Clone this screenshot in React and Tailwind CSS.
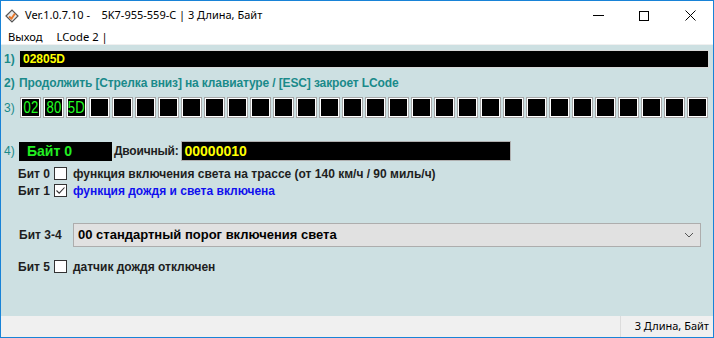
import React from "react";

const cells = ["02", "80", "5D", ...Array(27).fill("")];

function AppIcon() {
  return (
    <svg width="16" height="16" viewBox="0 0 16 16">
      <path d="M2 8 L8 2 L14 8 L8 14 Z" fill="#e9e9e9" stroke="#555" strokeWidth="1.2" />
      <path d="M5 8.5 L7.5 10.5 L11 5.5" fill="none" stroke="#e8782a" strokeWidth="2" />
    </svg>
  );
}

function Checkbox({ checked }) {
  return (
    <span className="flex h-[13px] w-[13px] items-center justify-center border border-[#333] bg-white">
      {checked && (
        <svg width="11" height="11" viewBox="0 0 11 11">
          <path d="M1.5 5.5 L4.2 8.2 L9.5 2.5" fill="none" stroke="#333" strokeWidth="1.1" />
        </svg>
      )}
    </span>
  );
}

export default function App() {
  return (
    <div className="flex h-[338px] w-[714px] flex-col overflow-hidden border border-[#1883d7] bg-white font-['Liberation_Sans',Arial,sans-serif]">
      {/* title bar */}
      <div className="flex h-[29px] items-center font-['Noto_Sans',sans-serif] text-[11px] text-black">
        <div className="ml-[3px] mr-[5px] flex items-center">
          <AppIcon />
        </div>
        <span className="whitespace-pre">Ver.1.0.7.10 -    5K7-955-559-C | 3 Длина, Байт</span>
        <div className="ml-auto flex h-full">
          <div className="flex w-[46px] items-center justify-center">
            <span className="h-px w-[11px] bg-black" />
          </div>
          <div className="flex w-[46px] items-center justify-center">
            <span className="h-[10px] w-[10px] border border-black" />
          </div>
          <div className="flex w-[46px] items-center justify-center">
            <svg width="11" height="11" viewBox="0 0 11 11">
              <path d="M0.5 0.5 L10.5 10.5 M10.5 0.5 L0.5 10.5" stroke="#000" strokeWidth="1" />
            </svg>
          </div>
        </div>
      </div>
      {/* menu */}
      <div className="flex h-[14px] items-center gap-[14px] pl-[7px] font-['Noto_Sans',sans-serif] text-[11.2px] leading-none text-black">
        <span>Выход</span>
        <span>LCode 2 |</span>
      </div>
      <div className="h-px bg-[#f0f0f0]" />

      {/* content */}
      <div className="flex flex-1 flex-col bg-[#cde0e2] pl-[3px] pr-[4px] text-[12px] font-bold">
        <div className="mt-[5px] flex items-center">
          <span className="w-[15px] text-[#1a8a8a]">1)</span>
          <div className="flex h-[18px] flex-1 items-center border border-[#d8d8d8] bg-black px-[3px] text-[#ffff00]">
            02805D
          </div>
        </div>
        <div className="mt-[6px] flex items-center text-[#1a8a8a]">
          <span className="w-[15px]">2)</span>
          <span className="tracking-[-0.13px]">Продолжить [Стрелка вниз] на клавиатуре / [ESC] закроет LCode</span>
        </div>
        <div className="mt-[5px] flex items-center">
          <span className="w-[16px] font-normal text-[#1a8a8a]">3)</span>
          <div className="flex gap-[2px]">
            {cells.map((c, i) => (
              <div
                key={i}
                className="flex h-[21px] w-[21px] items-center justify-center border border-[#a8a8a8] bg-black text-[#22ff22] outline outline-1 outline-white [outline-offset:-2px]"
              >
                <span className="scale-x-[0.82] text-[16px] font-normal leading-none">{c}</span>
              </div>
            ))}
          </div>
        </div>

        <div className="mt-[23px] flex h-[20px] items-center">
          <span className="w-[15px] font-normal text-[#1a8a8a]">4)</span>
          <div className="flex h-[19px] w-[93px] items-center bg-black pl-[8px] text-[14px] text-[#22ee22]">
            Байт 0
          </div>
          <span className="ml-[2px] tracking-[-0.2px] text-[#1e1e1e]">Двоичный:</span>
          <div className="ml-[2px] flex h-[20px] w-[330px] items-center border border-[#b0b0b0] bg-black pl-[3px] text-[14px] text-[#ffff00]">
            00000010
          </div>
        </div>

        <div className="mt-[4px] flex h-[17px] items-center pl-[14px] text-[#1e1e1e]">
          <span>Бит 0</span>
          <span className="ml-[4px]"><Checkbox /></span>
          <span className="ml-[6px]">функция включения света на трассе (от 140 км/ч / 90 миль/ч)</span>
        </div>
        <div className="flex h-[17px] items-center pl-[14px]">
          <span className="text-[#1e1e1e]">Бит 1</span>
          <span className="ml-[4px]"><Checkbox checked /></span>
          <span className="ml-[6px] text-[#1010ee]">функция дождя и света включена</span>
        </div>

        <div className="mt-[24px] flex items-center pl-[15px]">
          <span className="w-[54px] text-[#1e1e1e]">Бит 3-4</span>
          <div className="flex h-[24px] flex-1 items-center border border-[#adadad] bg-[#e1e1e1] pl-[4px] pr-[6px] text-[13px] text-black">
            <span>00 стандартный порог включения света</span>
            <svg className="ml-auto" width="10" height="6" viewBox="0 0 10 6">
              <path d="M1 1 L5 5 L9 1" fill="none" stroke="#555" strokeWidth="1" />
            </svg>
          </div>
          <span className="w-[8px]" />
        </div>

        <div className="mt-[11px] flex h-[17px] items-center pl-[14px] text-[#1e1e1e]">
          <span>Бит 5</span>
          <span className="ml-[4px]"><Checkbox /></span>
          <span className="ml-[6px]">датчик дождя отключен</span>
        </div>
      </div>

      {/* status bar */}
      <div className="flex h-[21px] items-center bg-[#f0f0f0] font-['Noto_Sans',sans-serif] text-[11px] text-black">
        <div className="ml-auto h-full border-l border-[#dcdcdc]" />
        <span className="pl-[14px] pr-[4px]">3 Длина, Байт</span>
      </div>
    </div>
  );
}
